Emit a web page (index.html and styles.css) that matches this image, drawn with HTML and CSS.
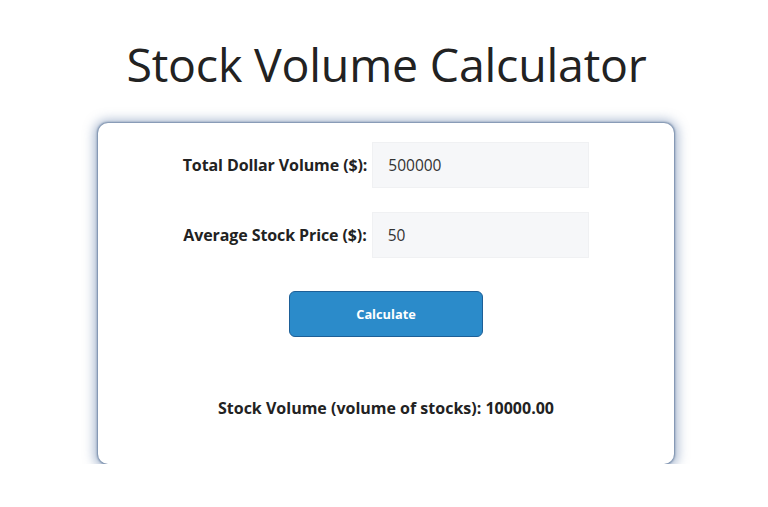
FILE: index.html
```html
<!DOCTYPE html>
<html lang="en">
<head>
<meta charset="utf-8">
<title>Stock Volume Calculator</title>
<link rel="stylesheet" href="styles.css">
</head>
<body>
<h1 class="title">Stock Volume Calculator</h1>
<div class="card">
  <div class="row">
    <label class="label" for="dv">Total Dollar Volume ($):</label>
    <input class="field" id="dv" type="text" value="500000">
  </div>
  <div class="row">
    <label class="label" for="sp">Average Stock Price ($):</label>
    <input class="field" id="sp" type="text" value="50">
  </div>
  <div class="actions">
    <button class="btn" type="button">Calculate</button>
  </div>
  <p class="result">Stock Volume (volume of stocks): 10000.00</p>
</div>
</body>
</html>
```
FILE: styles.css
```css
html, body {
  margin: 0;
  padding: 0;
  background: #ffffff;
}
body {
  font-family: "Open Sans", "Noto Sans", sans-serif;
  color: #222;
  display: flex;
  flex-direction: column;
  align-items: center;
}
.title {
  margin: 34px 0 0 5px;
  font-weight: 400;
  font-size: 46.5px;
  line-height: 60px;
  color: #222;
  letter-spacing: -0.2px;
}
.card {
  margin-top: 29px;
  margin-left: 4px;
  width: 576px;
  height: 341px;
  box-sizing: border-box;
  background: #fff;
  border-radius: 10px;
  box-shadow: 0 0 2px 1px rgba(60, 90, 130, 0.6), 0 1px 11px 4px rgba(90, 120, 165, 0.5);
  display: flex;
  flex-direction: column;
  align-items: center;
  padding-top: 19px;
}
.row {
  display: flex;
  align-items: center;
  gap: 5px;
  margin-bottom: 24px;
}
.label {
  font-size: 16px;
  font-weight: 700;
  color: #222;
  letter-spacing: -0.1px;
}
.field {
  width: 217px;
  height: 46px;
  box-sizing: border-box;
  border: 1px solid #f0f1f3;
  background: #f6f7f9;
  padding: 0 0 0 15px;
  font-family: inherit;
  font-size: 15.5px;
  color: #333;
  outline: none;
}
.actions {
  margin-top: 9px;
}
.btn {
  width: 194px;
  height: 46px;
  background: #2b8bca;
  border: 1px solid #1d5f97;
  border-radius: 6px;
  color: #fff;
  font-family: inherit;
  font-weight: 700;
  font-size: 12.8px;
}
.result {
  margin: 60px 0 0 0;
  font-size: 16px;
  font-weight: 700;
  color: #222;
  letter-spacing: 0;
}
```
